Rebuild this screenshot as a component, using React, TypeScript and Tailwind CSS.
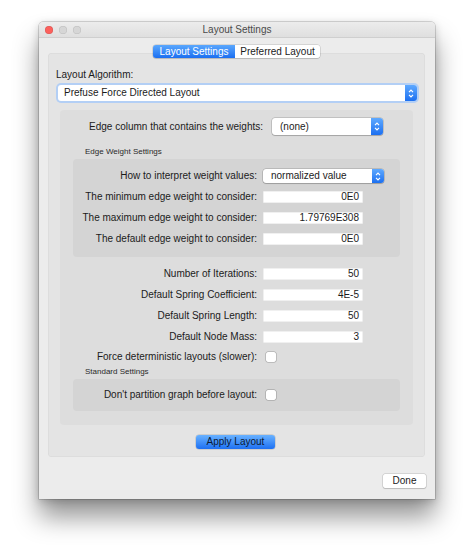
import React from "react";

const FONT = "font-['Liberation_Sans','Helvetica',sans-serif]";

const Stepper = () => (
  <div className="flex h-full w-[12px] shrink-0 items-center justify-center rounded-r-[3px] bg-gradient-to-b from-[#5ea9ff] to-[#1b6ff0]">
    <svg width="6" height="9" viewBox="0 0 6 9" fill="none" stroke="#fff" strokeWidth="1.2">
      <path d="M1 3.2 L3 1.2 L5 3.2" />
      <path d="M1 5.8 L3 7.8 L5 5.8" />
    </svg>
  </div>
);

const Select = ({ value, className }: { value: string; className: string }) => (
  <div
    className={`flex items-center rounded-[3px] bg-white shadow-[0_0_0_0.5px_rgba(0,0,0,0.25),0_1px_1px_rgba(0,0,0,0.15)] ${className}`}
  >
    <span className="flex-1 truncate pl-[6px] text-[10px] leading-none text-[#1b1b1b]">{value}</span>
    <Stepper />
  </div>
);

const Field = ({ value }: { value: string }) => (
  <div className="flex h-[12px] w-[100px] items-center justify-end bg-white pr-[4px] text-[10px] leading-none text-[#1b1b1b] shadow-[inset_0_0_0_0.5px_rgba(0,0,0,0.12)]">
    {value}
  </div>
);

const Checkbox = () => (
  <div className="ml-[3px] h-[10px] w-[10px] rounded-[2px] bg-white shadow-[0_0_0_0.5px_rgba(0,0,0,0.3)]" />
);

const Row = ({
  label,
  labelW,
  children,
}: {
  label: string;
  labelW: string;
  children: React.ReactNode;
}) => (
  <div className="flex items-center">
    <span className={`${labelW} shrink-0 pr-[6px] text-right text-[10px] leading-none text-[#1b1b1b]`}>{label}</span>
    {children}
  </div>
);

const GroupTitle = ({ children }: { children: React.ReactNode }) => (
  <div className="h-[10px] pl-[25px] text-[8px] leading-[10px] text-[#2a2a2a]">{children}</div>
);

export default function App() {
  return (
    <div className={`h-[555px] w-[474px] overflow-hidden bg-white pl-[39px] pt-[22px] ${FONT}`}>
      <div className="flex h-[477px] w-[396px] flex-col overflow-hidden rounded-t-[4px] bg-[#ececec] shadow-[0_0_0_0.5px_rgba(0,0,0,0.28),0_18px_26px_rgba(0,0,0,0.42),0_2px_8px_rgba(0,0,0,0.18)]">
        {/* title bar */}
        <div className="relative flex h-[16px] shrink-0 items-center justify-center border-b border-[#cfcfcf] bg-gradient-to-b from-[#ececec] to-[#dfdfdf]">
          <div className="absolute left-[6px] top-[4px] flex gap-[6px]">
            <span className="h-[8px] w-[8px] rounded-full bg-[#fc605c] shadow-[inset_0_0_0_0.5px_rgba(0,0,0,0.15)]" />
            <span className="h-[8px] w-[8px] rounded-full bg-[#d6d6d6] shadow-[inset_0_0_0_0.5px_rgba(0,0,0,0.12)]" />
            <span className="h-[8px] w-[8px] rounded-full bg-[#d6d6d6] shadow-[inset_0_0_0_0.5px_rgba(0,0,0,0.12)]" />
          </div>
          <span className="text-[10px] leading-none text-[#4a4a4a]">Layout Settings</span>
        </div>

        <div className="flex flex-1 flex-col pb-[11px] pl-[9px] pr-[10px]">
          {/* tabs */}
          <div className="relative z-10 mt-[7px] flex h-[13px] justify-center">
            <div className="flex overflow-hidden rounded-[3px] shadow-[0_0_0_0.5px_rgba(0,0,0,0.2),0_1px_1px_rgba(0,0,0,0.1)]">
              <span className="flex w-[82px] items-center justify-center bg-gradient-to-b from-[#5aa7fd] to-[#1a6ef1] text-[10px] leading-none text-white">
                Layout Settings
              </span>
              <span className="flex w-[85px] items-center justify-center bg-white text-[10px] leading-none text-[#1b1b1b]">
                Preferred Layout
              </span>
            </div>
          </div>

          {/* tab pane */}
          <div className="-mt-[5px] flex h-[404px] flex-col rounded-[4px] bg-[#e4e4e4] pl-[10px] pr-[8px] pt-[17px] shadow-[inset_0_0_0_0.5px_rgba(0,0,0,0.06)]">
            <div className="-ml-[2px] text-[10px] leading-[10px] text-[#1b1b1b]">Layout Algorithm:</div>
            <Select
              value="Prefuse Force Directed Layout"
              className="mt-[5px] h-[16px] w-[359px] ring-[2px] ring-[#b3cff5]"
            />

            {/* algorithm settings */}
            <div className="ml-[2px] mr-[4px] mt-[9px] flex h-[315px] flex-col rounded-[4px] bg-[#dddddd] pb-[13px] pt-[8px]">
              <div className="flex items-center">
                <span className="w-[203px] shrink-0 text-right text-[10px] leading-none text-[#1b1b1b]">
                  Edge column that contains the weights:
                </span>
                <Select value="(none)" className="ml-[9px] h-[17px] w-[111px] [&>span]:pl-[8px]" />
              </div>

              <div className="mt-[12px]">
                <GroupTitle>Edge Weight Settings</GroupTitle>
              </div>
              <div className="mx-[13px] mt-[2px] flex h-[98px] flex-col gap-[9px] rounded-[4px] bg-[#d4d4d4] pt-[10px]">
                <Row label="How to interpret weight values:" labelW="w-[190px]">
                  <Select value="normalized value" className="h-[14px] w-[121px] [&>span]:pl-[8px]" />
                </Row>
                <div className="-mt-[1px] flex flex-col gap-[9px]">
                  <Row label="The minimum edge weight to consider:" labelW="w-[190px]">
                    <Field value="0E0" />
                  </Row>
                  <Row label="The maximum edge weight to consider:" labelW="w-[190px]">
                    <Field value="1.79769E308" />
                  </Row>
                  <Row label="The default edge weight to consider:" labelW="w-[190px]">
                    <Field value="0E0" />
                  </Row>
                </div>
              </div>

              <div className="mt-[11px] flex flex-col gap-[9px]">
                <Row label="Number of Iterations:" labelW="w-[203px]">
                  <Field value="50" />
                </Row>
                <Row label="Default Spring Coefficient:" labelW="w-[203px]">
                  <Field value="4E-5" />
                </Row>
                <Row label="Default Spring Length:" labelW="w-[203px]">
                  <Field value="50" />
                </Row>
                <Row label="Default Node Mass:" labelW="w-[203px]">
                  <Field value="3" />
                </Row>
                <Row label="Force deterministic layouts (slower):" labelW="w-[203px]">
                  <Checkbox />
                </Row>
              </div>

              <div className="mt-[5px]">
                <GroupTitle>Standard Settings</GroupTitle>
              </div>
              <div className="mx-[13px] mt-[2px] flex h-[32px] items-center rounded-[4px] bg-[#d4d4d4]">
                <Row label="Don't partition graph before layout:" labelW="w-[190px]">
                  <Checkbox />
                </Row>
              </div>
            </div>

            <div className="mt-[10px] flex justify-center">
              <button className="-ml-[4px] h-[14px] w-[79px] rounded-[3px] bg-gradient-to-b from-[#68b1ff] to-[#1c6ff2] text-[10px] leading-none text-[#0b1a33] shadow-[0_0_0_0.5px_rgba(0,0,0,0.2)]">
                Apply Layout
              </button>
            </div>
          </div>

          <div className="mt-[17px] flex justify-end">
            <button className="-mr-[1px] h-[14px] w-[43px] rounded-[2px] bg-white text-[10px] leading-none text-[#1b1b1b] shadow-[0_0_0_0.5px_rgba(0,0,0,0.2),0_1px_1px_rgba(0,0,0,0.12)]">
              Done
            </button>
          </div>
        </div>
      </div>
    </div>
  );
}
